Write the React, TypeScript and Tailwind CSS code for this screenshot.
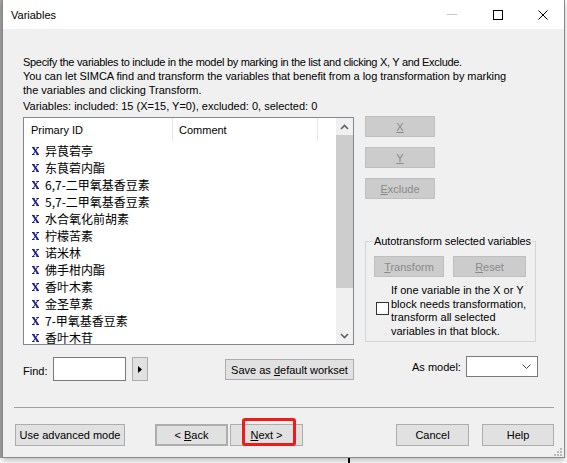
import React from 'react'

const items = [
  '异茛菪亭',
  '东茛菪内酯',
  '6,7-二甲氧基香豆素',
  '5,7-二甲氧基香豆素',
  '水合氧化前胡素',
  '柠檬苦素',
  '诺米林',
  '佛手柑内酯',
  '香叶木素',
  '金圣草素',
  '7-甲氧基香豆素',
  '香叶木苷',
]

function XMark() {
  return (
    <svg width="7" height="8" viewBox="0 0 7 8" className="shrink-0">
      <path d="M1.3 0.8 L5.8 7.2" stroke="#1d1d8a" strokeWidth="1.9" />
      <path d="M5.6 0.8 L1.3 7.2" stroke="#1d1d8a" strokeWidth="1" />
      <path d="M0 0.5 H2.6 M4.4 0.5 H7 M0 7.5 H2.6 M4.4 7.5 H7" stroke="#1d1d8a" strokeWidth="1" />
    </svg>
  )
}

function Chevron({ up }: { up?: boolean }) {
  return (
    <svg width="9" height="6" viewBox="0 0 9 6">
      <path
        d={up ? 'M1 5 L4.5 1.5 L8 5' : 'M1 1 L4.5 4.5 L8 1'}
        stroke="#606060"
        strokeWidth="1.6"
        fill="none"
      />
    </svg>
  )
}

function DisabledButton({ className, children }: { className: string; children: React.ReactNode }) {
  return (
    <div
      className={`h-[21px] flex items-center justify-center bg-[#cccccc] border border-[#bfbfbf] text-[#8a8a8a] ${className}`}
    >
      {children}
    </div>
  )
}

function Button({ className, children }: { className: string; children: React.ReactNode }) {
  return (
    <div
      className={`h-[22px] flex items-center justify-center bg-[#e1e1e1] border border-[#adadad] ${className}`}
    >
      {children}
    </div>
  )
}

export default function App() {
  return (
    <div className="w-[567px] h-[463px] bg-white overflow-hidden font-['Liberation_Sans','Noto_Sans_CJK_SC',sans-serif] text-[11px] leading-[14px] text-black">
      <div className="flex">
        <div className="w-[2px] h-[458px] bg-[#a3a3a3]" />
        <div className="w-[563px] h-[458px] flex flex-col border-x border-b border-[#888888] shadow-[0_3px_6px_rgba(0,0,0,0.25)]">
          {/* title bar */}
          <div className="h-[29px] bg-white flex items-center pl-[8px] pr-[16px]">
            <span className="text-[11px]">Variables</span>
            <div className="ml-auto w-[10px] h-px bg-[#c8c8c8]" />
            <div className="ml-[36px] w-[10px] h-[10px] border border-black" />
            <svg width="10" height="10" viewBox="0 0 10 10" className="ml-[35px]">
              <path d="M0.5 0.5 L9.5 9.5 M9.5 0.5 L0.5 9.5" stroke="#000" strokeWidth="1" />
            </svg>
          </div>

          {/* body */}
          <div className="relative flex-1 bg-[#f0f0f0] pt-[26px]">
            <div className="pl-[20px]">
              <div className="whitespace-nowrap">
                <div className="tracking-[-0.3px]">
                  Specify the variables to include in the model by marking in the list and clicking X, Y and Exclude.
                </div>
                <div className="tracking-[-0.05px]">
                  You can let SIMCA find and transform the variables that benefit from a log transformation by marking
                </div>
                <div>the variables and clicking Transform.</div>
              </div>
              <div className="mt-[2px]">Variables: included: 15 (X=15, Y=0), excluded: 0, selected: 0</div>

              <div className="mt-[3px] flex items-start">
                {/* list */}
                <div className="mt-[1px] w-[331px] h-[228px] border border-[#828790] bg-white flex overflow-hidden">
                  <div className="flex-1 flex flex-col">
                    <div className="h-[23px] flex shrink-0">
                      <div className="w-[149px] pl-[7px] flex items-center border-r border-[#e5e5e5]">Primary ID</div>
                      <div className="w-[145px] pl-[6px] flex items-center border-r border-[#e5e5e5]">Comment</div>
                    </div>
                    <div className="mt-[1px] font-['Noto_Sans_CJK_SC',sans-serif] text-[12px]">
                      {items.map((it) => (
                        <div key={it} className="h-[17px] flex items-center pl-[8px]">
                          <XMark />
                          <span className="ml-[6px] leading-[17px]">{it}</span>
                        </div>
                      ))}
                    </div>
                  </div>
                  <div className="w-[17px] bg-[#f0f0f0] flex flex-col">
                    <div className="h-[17px] flex items-center justify-center">
                      <Chevron up />
                    </div>
                    <div className="h-[153px] bg-[#cdcdcd]" />
                    <div className="flex-1" />
                    <div className="h-[17px] flex items-center justify-center">
                      <Chevron />
                    </div>
                  </div>
                </div>

                {/* right column */}
                <div className="ml-[11px] w-[173px] flex flex-col">
                  <DisabledButton className="w-[70px]">
                    <span className="underline">X</span>
                  </DisabledButton>
                  <DisabledButton className="w-[70px] mt-[10px]">
                    <span className="underline">Y</span>
                  </DisabledButton>
                  <DisabledButton className="w-[70px] mt-[10px]">
                    <span>
                      <span className="underline">E</span>xclude
                    </span>
                  </DisabledButton>

                  <div className="relative mt-[42px] w-[171px] h-[101px] border border-[#d5d5d5] pt-[14px] pl-[8px]">
                    <span className="absolute left-[7px] top-[-8px] px-[1px] bg-[#f0f0f0] whitespace-nowrap tracking-[-0.1px]">
                      Autotransform selected variables
                    </span>
                    <div className="flex">
                      <DisabledButton className="w-[70px]">
                        <span>
                          <span className="underline">T</span>ransform
                        </span>
                      </DisabledButton>
                      <DisabledButton className="w-[73px] ml-[9px]">
                        <span>
                          <span className="underline">R</span>eset
                        </span>
                      </DisabledButton>
                    </div>
                    <div className="mt-[7px] flex items-start">
                      <div className="mt-[18px] ml-[2px] w-[13px] h-[13px] border border-[#333333] bg-white shrink-0" />
                      <div className="ml-[2px] leading-[13.5px] whitespace-nowrap">
                        If one variable in the X or Y
                        <br />
                        block needs transformation,
                        <br />
                        transform all selected
                        <br />
                        variables in that block.
                      </div>
                    </div>
                  </div>
                </div>
              </div>

              {/* find row */}
              <div className="mt-[11px] flex items-start">
                <div className="mt-[8px] w-[30px]">Find:</div>
                <div className="mt-[1px] w-[73px] h-[24px] bg-white border border-[#7a7a7a]" />
                <div className="mt-[1px] ml-[6px] w-[16px] h-[24px] bg-[#e1e1e1] border border-[#adadad] flex items-center justify-center">
                  <svg width="4" height="7" viewBox="0 0 4 7">
                    <path d="M0 0 L4 3.5 L0 7 Z" fill="#000" />
                  </svg>
                </div>
                <div className="mt-[3px] ml-[77px] w-[129px] h-[21px] bg-[#e1e1e1] border border-[#adadad] flex items-center justify-center">
                  <span>
                    Save as <span className="underline">d</span>efault workset
                  </span>
                </div>
                <div className="mt-[4px] ml-[58px] w-[54px]">As model:</div>
                <div className="w-[72px] h-[21px] bg-white border border-[#7a7a7a] flex items-center justify-end pr-[6px]">
                  <svg width="9" height="5" viewBox="0 0 9 5">
                    <path d="M0.5 0.5 L4.5 4.5 L8.5 0.5" stroke="#444" strokeWidth="1" fill="none" />
                  </svg>
                </div>
              </div>
            </div>

            {/* separator */}
            <div className="mt-[26px] ml-[11px] w-[540px] h-px bg-[#a0a0a0]" />

            {/* bottom buttons */}
            <div className="mt-[16px] ml-[12px] flex">
              <Button className="w-[110px]">Use advanced mode</Button>
              <Button className="ml-[30px] w-[73px] border-2 border-[#0078d7]">
                <span>
                  &lt; <span className="underline">B</span>ack
                </span>
              </Button>
              <div className="relative ml-[2px]">
                <Button className="w-[73px]">
                  <span>
                    <span className="underline">N</span>ext &gt;
                  </span>
                </Button>
                <div className="absolute left-[12px] top-[-6px] w-[54px] h-[28px] border-[3px] border-[#f01a1a] rounded-[3px]" />
              </div>
              <Button className="ml-[93px] w-[73px]">Cancel</Button>
              <Button className="ml-[13px] w-[72px]">Help</Button>
            </div>

            {/* size grip */}
            <svg width="8" height="8" viewBox="0 0 8 8" className="absolute right-[2px] bottom-[1px]">
              <g fill="#b8b8b8">
                <rect x="6" y="0" width="2" height="2" />
                <rect x="3" y="3" width="2" height="2" />
                <rect x="6" y="3" width="2" height="2" />
                <rect x="0" y="6" width="2" height="2" />
                <rect x="3" y="6" width="2" height="2" />
                <rect x="6" y="6" width="2" height="2" />
              </g>
            </svg>
          </div>
        </div>
      </div>
      <div className="ml-[348px] w-[2px] h-[5px] bg-black" />
    </div>
  )
}
